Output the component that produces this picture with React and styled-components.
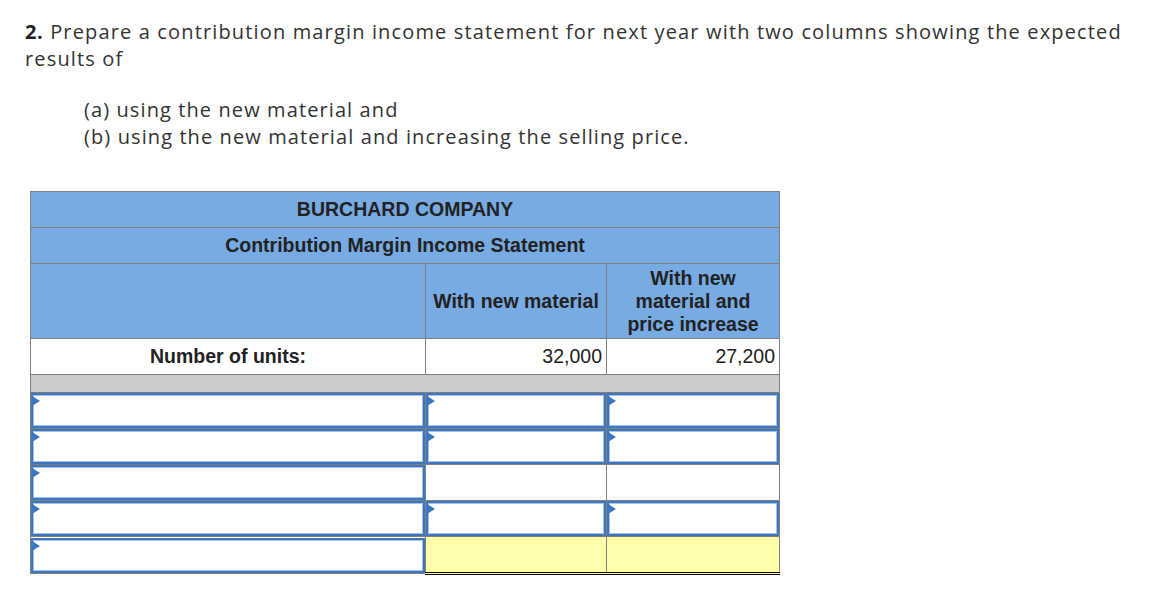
import styled, { createGlobalStyle } from "styled-components";

const GlobalStyle = createGlobalStyle`
  body {
    margin: 0;
    background: #ffffff;
  }
`;

const Page = styled.div`
  padding: 18px 0 0 25px;
  font-family: "Open Sans", "Liberation Sans", sans-serif;
  color: #333333;
`;

const Question = styled.p`
  margin: 0;
  width: 1115px;
  font-size: 20px;
  line-height: 27px;
  letter-spacing: 1.15px;
`;

const Num = styled.b`
  display: inline-block;
  font-weight: 700;
  color: #222222;
  letter-spacing: 0.5px;
  margin-right: 7px;
`;

const Parts = styled.p`
  margin: 24px 0 0 59px;
  font-size: 20px;
  line-height: 27px;
  letter-spacing: 1.1px;
`;

const Statement = styled.table`
  margin: 41px 0 0 5px;
  width: 749px;
  table-layout: fixed;
  border-collapse: collapse;
  font-family: "Liberation Sans", Arial, sans-serif;
  font-size: 19.5px;
  color: #222222;
`;

const HeadCell = styled.td`
  background: #78abe4;
  border: 1px solid #808080;
  height: ${({ $tall }) => ($tall ? "74px" : "35px")};
  padding: 0 4px;
  font-weight: 700;
  text-align: center;
  line-height: 23px;
  vertical-align: middle;
`;

const Cell = styled.td`
  border: 1px solid #808080;
  height: 35px;
  padding: 0 4px;
  font-weight: ${({ $bold }) => ($bold ? 700 : 400)};
  text-align: ${({ $align }) => $align || "left"};
  vertical-align: middle;
  background: ${({ $total }) => ($total ? "#ffffaa" : "#ffffff")};
  border-top: ${({ $sub, $total }) =>
    $sub || $total ? "1px solid #000000" : "1px solid #808080"};
  border-bottom: ${({ $total }) =>
    $total ? "3px double #000000" : "1px solid #808080"};
`;

const Spacer = styled.td`
  background: #cccccc;
  border: 1px solid #808080;
  height: 17px;
  padding: 0;
`;

const InputCell = styled.td`
  border: 1px solid #808080;
  height: 35px;
  padding: 0;
`;

const InputBox = styled.div`
  position: relative;
  box-sizing: border-box;
  height: 35px;
  border: 2px solid #3f76bd;
  box-shadow: inset 0 0 0 1px #a3c2ea;
  background: #ffffff;
`;

const Marker = styled.span`
  position: absolute;
  z-index: 1;
  top: 1px;
  left: -1px;
  display: block;
  width: 0;
  height: 0;
  border-top: 5.5px solid transparent;
  border-bottom: 5.5px solid transparent;
  border-left: 8px solid #3a76c2;
`;

const Input = () => (
  <InputCell>
    <InputBox>
      <Marker />
    </InputBox>
  </InputCell>
);

const rows = [
  { inputs: true },
  { inputs: true },
  { inputs: false },
  { inputs: true },
];

export default function App() {
  return (
    <>
      <GlobalStyle />
      <Page>
        <Question>
          <Num>2.</Num>Prepare a contribution margin income statement for next
          year with two columns showing the expected results of
        </Question>
        <Parts>
          (a) using the new material and
          <br />
          (b) using the new material and increasing the selling price.
        </Parts>
        <Statement>
          <colgroup>
            <col style={{ width: 395 }} />
            <col style={{ width: 181 }} />
            <col style={{ width: 173 }} />
          </colgroup>
          <tbody>
            <tr>
              <HeadCell colSpan={3}>BURCHARD COMPANY</HeadCell>
            </tr>
            <tr>
              <HeadCell colSpan={3}>Contribution Margin Income Statement</HeadCell>
            </tr>
            <tr>
              <HeadCell $tall />
              <HeadCell $tall>With new material</HeadCell>
              <HeadCell $tall>
                With new
                <br />
                material and
                <br />
                price increase
              </HeadCell>
            </tr>
            <tr>
              <Cell $bold $align="center">
                Number of units:
              </Cell>
              <Cell $align="right">32,000</Cell>
              <Cell $align="right">27,200</Cell>
            </tr>
            <tr>
              <Spacer colSpan={3} />
            </tr>
            {rows.map((row, i) => (
              <tr key={i}>
                <Input />
                {row.inputs ? (
                  <>
                    <Input />
                    <Input />
                  </>
                ) : (
                  <>
                    <Cell $sub />
                    <Cell $sub />
                  </>
                )}
              </tr>
            ))}
            <tr>
              <Input />
              <Cell $total />
              <Cell $total />
            </tr>
          </tbody>
        </Statement>
      </Page>
    </>
  );
}
